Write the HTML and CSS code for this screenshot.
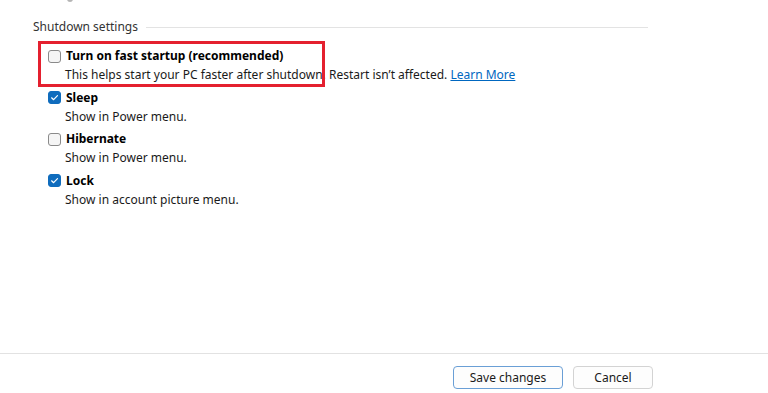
FILE: index.html
```html
<!DOCTYPE html>
<html lang="en">
<head>
<meta charset="utf-8">
<title>Shutdown settings</title>
<link rel="stylesheet" href="styles.css">
</head>
<body>
<div class="page">
  <main class="content">
    <span class="stray"></span>
    <div class="group-head">
      <span class="group-title">Shutdown settings</span>
      <span class="group-rule"></span>
    </div>
    <ul class="options">
      <li class="option highlight">
        <label class="option-title"><span class="box"></span>Turn on fast startup (recommended)</label>
        <p class="option-desc">This helps start your PC faster after shutdown. Restart isn’t affected. <a href="#" class="link">Learn More</a></p>
      </li>
      <li class="option">
        <label class="option-title"><span class="box checked"><svg viewBox="0 0 13 13" width="13" height="13"><path d="M3.6 6.8 L5.6 8.7 L9.5 4.6" fill="none" stroke="#fff" stroke-width="1.2" stroke-linecap="round" stroke-linejoin="round"/></svg></span>Sleep</label>
        <p class="option-desc">Show in Power menu.</p>
      </li>
      <li class="option">
        <label class="option-title"><span class="box"></span>Hibernate</label>
        <p class="option-desc">Show in Power menu.</p>
      </li>
      <li class="option">
        <label class="option-title"><span class="box checked"><svg viewBox="0 0 13 13" width="13" height="13"><path d="M3.6 6.8 L5.6 8.7 L9.5 4.6" fill="none" stroke="#fff" stroke-width="1.2" stroke-linecap="round" stroke-linejoin="round"/></svg></span>Lock</label>
        <p class="option-desc">Show in account picture menu.</p>
      </li>
    </ul>
  </main>
  <footer class="footer">
    <button class="btn btn-primary">Save changes</button>
    <button class="btn">Cancel</button>
  </footer>
</div>
</body>
</html>
```

FILE: styles.css
```css
*, *::before, *::after { box-sizing: border-box; }
html, body { margin: 0; padding: 0; background: #ffffff; }
body {
  font-family: "Noto Sans", "Liberation Sans", sans-serif;
  font-size: 12px;
  color: #1a1a1a;
}
.page {
  height: 393px;
  display: flex;
  flex-direction: column;
}
.content {
  flex: 1;
  position: relative;
  padding: 18px 120px 0 33px;
}
.stray {
  position: absolute;
  left: 67px;
  top: -4px;
  width: 6px;
  height: 6px;
  border-radius: 50%;
  background: #b5b5b5;
}
.group-head {
  display: flex;
  align-items: center;
  height: 18px;
  gap: 8px;
}
.group-title {
  color: #333;
  line-height: 18px;
}
.group-rule {
  flex: 1;
  height: 1px;
  background: #e3e3e3;
}
.options {
  list-style: none;
  margin: 11px 0 0 0;
  padding: 0 0 0 15px;
  display: flex;
  flex-direction: column;
  gap: 4.5px;
}
.option { position: relative; }
.option-title {
  display: flex;
  align-items: center;
  gap: 5px;
  font-weight: 700;
  color: #000;
  line-height: 18px;
  height: 18px;
}
.option-desc {
  margin: 0;
  padding-left: 17px;
  line-height: 19px;
  color: #1a1a1a;
}
.highlight::after {
  content: "";
  position: absolute;
  left: -10px;
  top: -6px;
  width: 287px;
  height: 46px;
  border: 3px solid #e4202f;
  pointer-events: none;
}
.box {
  width: 13px;
  height: 13px;
  border: 1px solid #8a8a8a;
  border-radius: 3px;
  background: #f5f5f5;
  display: inline-flex;
  flex: none;
}
.box.checked {
  background: #0f6cbd;
  border-color: #0f6cbd;
}
.box.checked svg { margin: -1px; }
.link {
  color: #0067c0;
  text-decoration: underline;
}
.footer {
  height: 40px;
  border-top: 1px solid #e2e2e2;
  display: flex;
  justify-content: flex-end;
  align-items: flex-start;
  gap: 10px;
  padding: 12px 115px 0 0;
}
.btn {
  height: 23px;
  font-family: "Noto Sans", "Liberation Sans", sans-serif;
  font-size: 12px;
  color: #1a1a1a;
  background: #fdfdfd;
  border: 1px solid #d3d3d3;
  border-radius: 4px;
  width: 80px;
  padding: 0;
}
.btn-primary {
  width: 110px;
  border-color: #6a9fd6;
}
```
